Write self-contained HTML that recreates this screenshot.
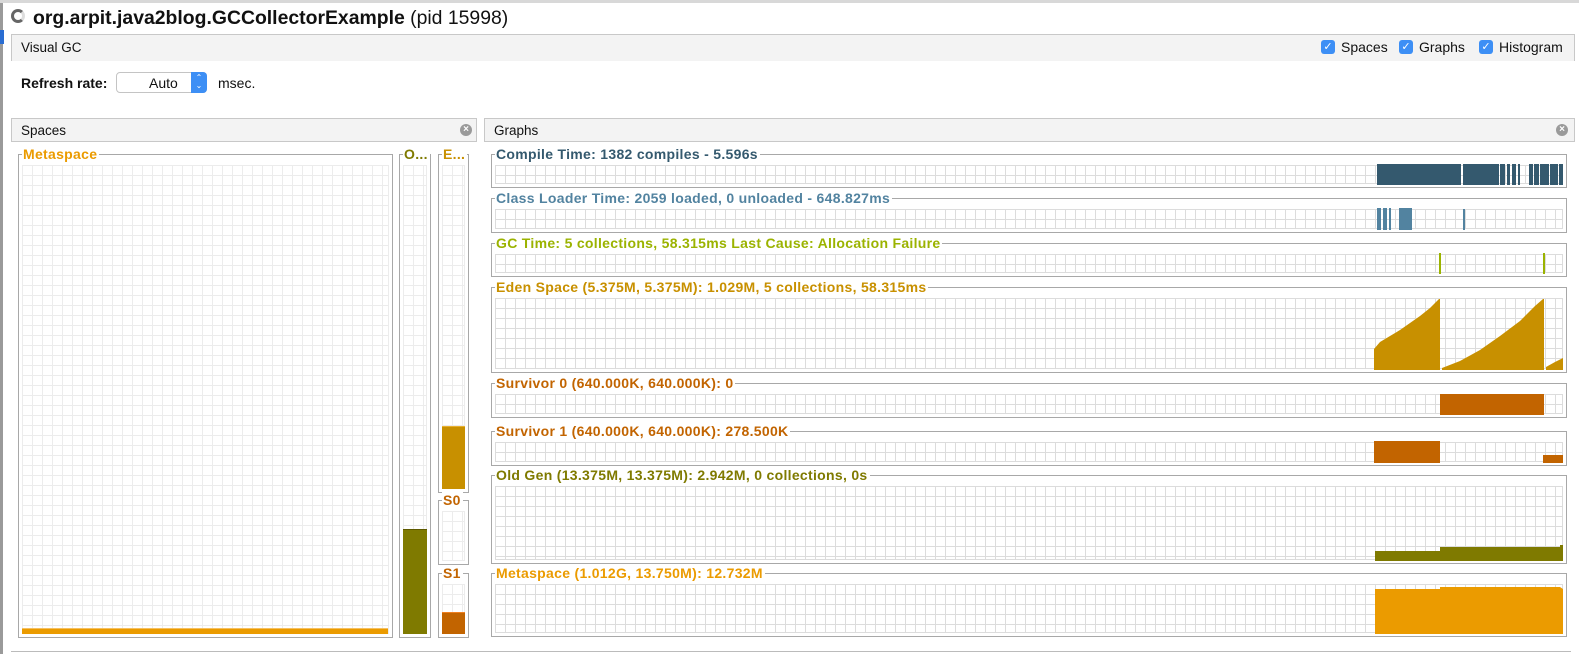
<!DOCTYPE html>
<html><head><meta charset="utf-8"><style>
body{margin:0;width:1579px;height:654px;background:#fff;font-family:"Liberation Sans",sans-serif;position:relative;overflow:hidden}
.a{position:absolute}
.hdr{position:absolute;background:#f3f3f3;border:1px solid #c8c8c8;box-sizing:border-box;font-size:13.5px;color:#111}
.box{position:absolute;border:1px solid #a8a8a8;box-sizing:border-box}
.grid{position:absolute;left:3px;right:3px;top:10px;bottom:3px;background-color:#fff;
background-image:linear-gradient(to right,#dcdcdc 1px,transparent 1px),linear-gradient(to bottom,#dcdcdc 1px,transparent 1px);
background-size:10px 10px;border-right:1px solid #dcdcdc;border-bottom:1px solid #dcdcdc}
.lg{background-image:linear-gradient(to right,#ececec 1px,transparent 1px),linear-gradient(to bottom,#ececec 1px,transparent 1px);border-color:#ececec}
.lbl{position:absolute;top:-9px;left:3px;background:#fff;padding:0 2px 0 1px;font-size:14px;letter-spacing:0.3px;font-weight:bold;white-space:nowrap;line-height:16px}
.x{position:absolute;width:12px;height:12px;border-radius:50%;background:#9a9a9a;color:#fff;font-size:10px;line-height:12px;text-align:center;font-weight:bold}
.cb{position:absolute;top:40px;width:14px;height:14px;border-radius:3px;background:#3d8ff5;color:#fff;font-size:11px;line-height:14px;text-align:center}
.ct{position:absolute;top:39px;font-size:14px;color:#111}
</style></head><body>
<div class="a" style="left:0;top:0;width:1579px;height:3px;background:#d8d8d8"></div>
<div class="a" style="left:0;top:3px;width:3px;height:651px;background:#9a9a9a"></div>
<div class="a" style="left:0;top:30px;width:4px;height:14px;background:#2a6dd2"></div>
<div class="a" style="left:11px;top:9px;width:14px;height:14px;border-radius:50%;border:3px solid #666;border-right-color:#ddd;box-sizing:border-box"></div>
<div class="a" style="left:33px;top:7px;font-size:19.4px;color:#111;white-space:nowrap"><b>org.arpit.java2blog.GCCollectorExample</b> (pid 15998)</div>

<div class="hdr" style="left:11px;top:34px;width:1564px;height:27px;border-bottom:none"><span class="a" style="left:9px;top:5px">Visual GC</span></div>
<div class="cb" style="left:1321px">✓</div><div class="ct" style="left:1341px">Spaces</div>
<div class="cb" style="left:1399px">✓</div><div class="ct" style="left:1419px">Graphs</div>
<div class="cb" style="left:1479px">✓</div><div class="ct" style="left:1499px">Histogram</div>

<div class="a" style="left:21px;top:75px;font-size:14px;font-weight:bold;color:#111">Refresh rate:</div>
<div class="a" style="left:116px;top:72px;width:91px;height:21px;border:1px solid #c4c4c4;border-radius:4px;box-sizing:border-box;background:#fff"></div>
<div class="a" style="left:149px;top:75px;font-size:14px;color:#111">Auto</div>
<div class="a" style="left:191px;top:72px;width:16px;height:21px;background:#3d8ff5;border-radius:0 4px 4px 0;color:#fff;font-size:8px;line-height:8px;text-align:center;padding-top:2px;box-sizing:border-box">⌃<br>⌄</div>
<div class="a" style="left:218px;top:75px;font-size:14px;color:#111">msec.</div>

<div class="hdr" style="left:11px;top:118px;width:466px;height:24px"><span class="a" style="left:9px;top:4px">Spaces</span></div>
<div class="x" style="left:460px;top:124px">×</div>
<div class="hdr" style="left:484px;top:118px;width:1091px;height:24px"><span class="a" style="left:9px;top:4px">Graphs</span></div>
<div class="x" style="left:1556px;top:124px">×</div>

<div class="box" style="left:18px;top:154px;width:375px;height:484px"><div class="grid lg"></div><div class="lbl" style="color:#eb9b00">Metaspace</div>
<div class="a" style="left:3px;right:4px;bottom:3px;height:5px;background:#eb9b00;border-top:1px solid #f5c060"></div></div>
<div class="box" style="left:399px;top:154px;width:32px;height:484px"><div class="grid lg"></div><div class="lbl" style="color:#7f7a00">O...</div>
<div class="a" style="left:3px;right:3px;bottom:3px;height:104px;background:#7f7a00;border-top:1px solid #5e5a00"></div></div>
<div class="box" style="left:438px;top:154px;width:31px;height:339px"><div class="grid lg"></div><div class="lbl" style="color:#c89000">E...</div>
<div class="a" style="left:3px;right:3px;bottom:3px;height:62px;background:#c89000;border-top:1px solid #e8b030"></div></div>
<div class="box" style="left:438px;top:500px;width:31px;height:65px"><div class="grid lg"></div><div class="lbl" style="color:#c26400">S0</div></div>
<div class="box" style="left:438px;top:573px;width:31px;height:65px"><div class="grid lg"></div><div class="lbl" style="color:#c26400">S1</div>
<div class="a" style="left:3px;right:3px;bottom:3px;height:21px;background:#c26400;border-top:1px solid #f08020"></div></div>

<div class="box" style="left:491px;top:154px;width:1076px;height:34px"><div class="grid"></div><div class="lbl" style="color:#34596e">Compile Time: 1382 compiles - 5.596s</div></div>
<div class="box" style="left:491px;top:198px;width:1076px;height:35px"><div class="grid"></div><div class="lbl" style="color:#5283a0">Class Loader Time: 2059 loaded, 0 unloaded - 648.827ms</div></div>
<div class="box" style="left:491px;top:243px;width:1076px;height:34px"><div class="grid"></div><div class="lbl" style="color:#9bb300">GC Time: 5 collections, 58.315ms Last Cause: Allocation Failure</div></div>
<div class="box" style="left:491px;top:287px;width:1076px;height:86px"><div class="grid"></div><div class="lbl" style="color:#c89000">Eden Space (5.375M, 5.375M): 1.029M, 5 collections, 58.315ms</div></div>
<div class="box" style="left:491px;top:383px;width:1076px;height:35px"><div class="grid"></div><div class="lbl" style="color:#c26400">Survivor 0 (640.000K, 640.000K): 0</div></div>
<div class="box" style="left:491px;top:431px;width:1076px;height:35px"><div class="grid"></div><div class="lbl" style="color:#c26400">Survivor 1 (640.000K, 640.000K): 278.500K</div></div>
<div class="box" style="left:491px;top:475px;width:1076px;height:89px"><div class="grid"></div><div class="lbl" style="color:#7f7a00">Old Gen (13.375M, 13.375M): 2.942M, 0 collections, 0s</div></div>
<div class="box" style="left:491px;top:573px;width:1076px;height:64px"><div class="grid"></div><div class="lbl" style="color:#eb9b00">Metaspace (1.012G, 13.750M): 12.732M</div></div>

<svg class="a" style="left:0;top:0" width="1579" height="654">
<g fill="#34596e">
<rect x="1377" y="164" width="84" height="21"/><rect x="1463" y="164" width="36" height="21"/>
<rect x="1500" y="164" width="5" height="21"/><rect x="1507" y="164" width="3" height="21"/><rect x="1512" y="164" width="4" height="21"/><rect x="1518" y="164" width="2" height="21"/>
<rect x="1529" y="164" width="4" height="21"/><rect x="1534" y="164" width="5" height="21"/><rect x="1540" y="164" width="9" height="21"/><rect x="1550" y="164" width="8" height="21"/><rect x="1559" y="164" width="4" height="21"/>
</g>
<g fill="#5283a0">
<rect x="1377" y="208" width="4" height="22"/><rect x="1383" y="208" width="4" height="22"/><rect x="1389" y="208" width="2" height="22"/>
<rect x="1399" y="208" width="13" height="22"/><rect x="1463" y="209" width="2" height="21"/>
</g>
<g fill="#9bb300"><rect x="1439" y="253" width="2" height="21"/><rect x="1543" y="253" width="2" height="21"/></g>
<polygon fill="#c89000" points="1374,370 1374,349 1380,342 1390,336 1400,330 1410,323 1420,316 1430,308 1439,299 1440,299 1440,370"/>
<polygon fill="#c89000" points="1442,370 1442,368 1460,361 1480,350 1500,336 1520,321 1535,306 1543,299 1544,299 1544,370"/>
<polygon fill="#c89000" points="1546,370 1546,367 1555,362 1563,358 1563,370"/>
<rect fill="#c26400" x="1440" y="394" width="104" height="21"/>
<rect fill="#c26400" x="1374" y="441" width="66" height="22"/><rect fill="#c26400" x="1543" y="455" width="20" height="8"/>
<polygon fill="#7f7a00" points="1375,561 1375,551 1440,551 1440,547 1560,547 1560,545 1563,545 1563,561"/>
<polygon fill="#eb9b00" points="1375,634 1375,589 1440,589 1440,587 1560,587 1563,589 1563,634"/>
</svg>
<div class="a" style="left:11px;top:651px;width:1560px;height:1px;background:#bbb"></div>
</body></html>
